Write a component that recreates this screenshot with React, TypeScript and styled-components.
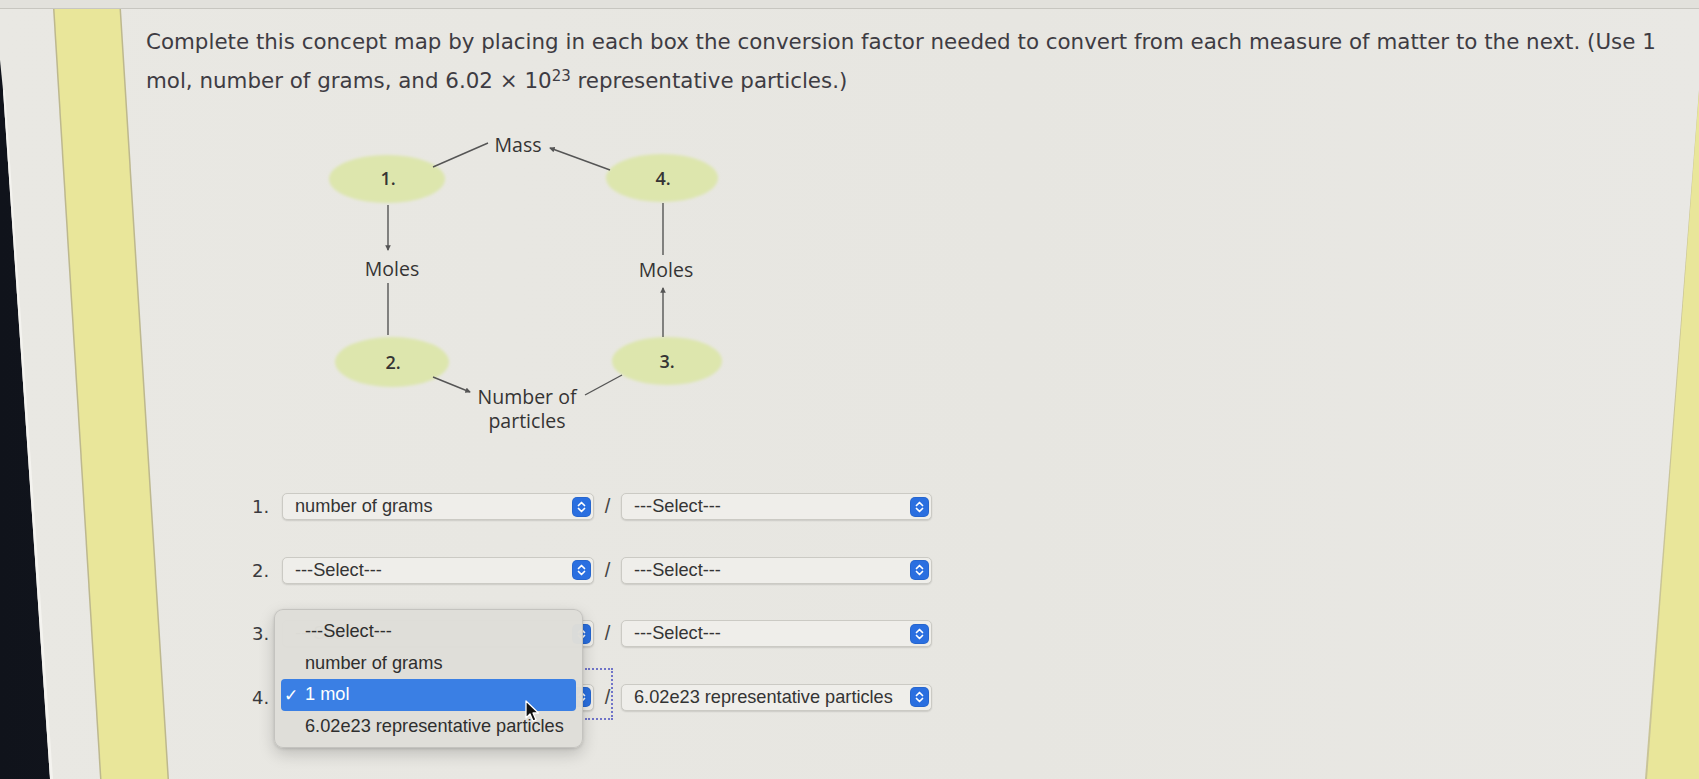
import React from "react";
import styled, { createGlobalStyle } from "styled-components";

const GlobalStyle = createGlobalStyle`
  html, body {
    margin: 0;
    padding: 0;
    overflow: hidden;
  }
  body {
    background: #e8e7e2;
  }
`;

const YELLOW = "#e9e69a";
const INK = "#3e3c43";

const Page = styled.div`
  display: grid;
  width: 100vw;
  height: 779px;
  overflow: hidden;
  background: linear-gradient(90deg, #e9e8e3 0%, #e7e6e1 60%, #e9e8e4 100%);

  > * {
    grid-area: 1 / 1;
  }
`;

const TopStrip = styled.div`
  align-self: start;
  height: 8px;
  background: #e2e1dc;
  border-bottom: 1px solid #c7c6c0;
`;

const DarkEdge = styled.div`
  background: linear-gradient(90deg, #10131b, #252a35);
  clip-path: polygon(0 60px, 3px 90px, 50px 100%, 0 100%);
`;

const EdgeHighlight = styled.div`
  background: #f4f3ef;
  clip-path: polygon(3px 90px, 5px 90px, 53px 100%, 50px 100%);
`;

const BandBorder = styled.div`
  background: #bdb88e;
  clip-path: polygon(53px 9px, 121px 9px, 169px 100%, 100px 100%);
`;

const Band = styled.div`
  background: ${YELLOW};
  clip-path: polygon(54.5px 9px, 119.5px 9px, 167.5px 100%, 101.5px 100%);
`;

const WedgeBorder = styled.div`
  background: #c9c497;
  clip-path: polygon(100% 90px, 100% 100%, calc(100% - 54px) 100%);
`;

const Wedge = styled.div`
  background: ${YELLOW};
  clip-path: polygon(100% 92px, 100% 100%, calc(100% - 52px) 100%);
`;

const Content = styled.main`
  display: flex;
  flex-direction: column;
  align-items: flex-start;
  padding: 22px 0 0 146px;
`;

const Question = styled.p`
  margin: 0;
  width: 1536px;
  font-family: "DejaVu Sans", Verdana, sans-serif;
  font-size: 21.4px;
  line-height: 39px;
  color: ${INK};

  sup {
    font-size: 0.7em;
    line-height: 0;
    vertical-align: 0.5em;
  }
`;

const MapFigure = styled.figure`
  margin: 25px 0 0 174px;
  width: 410px;
  height: 310px;

  svg {
    display: block;
  }

  text {
    font-family: "Open Sans", "Noto Sans", sans-serif;
    font-size: 19.5px;
    fill: #353434;
    text-anchor: middle;
  }

  text.num {
    font-weight: 600;
    font-size: 18px;
  }
`;

const Rows = styled.div`
  position: relative;
  margin: 58px 0 0 106px;
  display: grid;
  grid-template-columns: 30px 312px 27px 311px;
  grid-auto-rows: 27px;
  row-gap: 36.5px;
  align-items: center;
`;

const Num = styled.span`
  font-family: "DejaVu Sans", Verdana, sans-serif;
  font-size: 18px;
  color: #3a3a3e;
`;

const Slash = styled.span`
  justify-self: center;
  font-family: "Liberation Sans", Arial, sans-serif;
  font-size: 20px;
  color: #444;
`;

const SelectBox = styled.div`
  display: flex;
  align-items: center;
  justify-content: space-between;
  height: 27px;
  box-sizing: border-box;
  padding: 0 2px 0 12px;
  background: #efeeea;
  border: 1px solid #cbcac4;
  border-radius: 5px;
  box-shadow: 0 1px 1.5px rgba(0, 0, 0, 0.12);
  font-family: "Liberation Sans", Arial, sans-serif;
  font-size: 18.2px;
  color: #343434;
  white-space: nowrap;
`;

const Stepper = styled.span`
  display: inline-flex;
  align-items: center;
  justify-content: center;
  flex: none;
  width: 19px;
  height: 20px;
  border-radius: 5px;
  background: #2a6fe0;
  box-shadow: inset 0 0 0 1px rgba(0, 0, 0, 0.08);
`;

const Menu = styled.ul`
  position: absolute;
  left: 22px;
  top: 116px;
  width: 309px;
  height: 139px;
  box-sizing: border-box;
  margin: 0;
  padding: 6px 6px 7px;
  list-style: none;
  background: rgba(222, 221, 216, 0.98);
  border: 1px solid rgba(0, 0, 0, 0.12);
  border-radius: 9px;
  box-shadow: 0 6px 16px rgba(0, 0, 0, 0.18), 0 1px 3px rgba(0, 0, 0, 0.12);
  font-family: "Liberation Sans", Arial, sans-serif;
  font-size: 18.2px;
`;

const MenuItem = styled.li<{ $active?: boolean }>`
  display: grid;
  grid-template-columns: 21px 1fr;
  align-items: center;
  height: 31.5px;
  padding-left: 3px;
  border-radius: 4px;
  color: ${(p) => (p.$active ? "#ffffff" : "#2e2e2e")};
  background: ${(p) => (p.$active ? "#3a7fe4" : "transparent")};
  white-space: nowrap;
`;

const Check = styled.span`
  font-family: "DejaVu Sans", sans-serif;
  font-size: 17px;
  font-weight: bold;
`;

const FocusRing = styled.div`
  position: absolute;
  left: 333px;
  top: 175px;
  width: 26px;
  height: 48px;
  border: 2px dotted #7074c8;
  border-left: none;
  pointer-events: none;
`;

const Cursor = styled.svg`
  position: absolute;
  left: 273px;
  top: 207px;
`;

const StepperIcon = () => (
  <Stepper>
    <svg width="11" height="14" viewBox="0 0 11 14">
      <path d="M2.5 5.5 L5.5 2.5 L8.5 5.5 M2.5 8.5 L5.5 11.5 L8.5 8.5" fill="none" stroke="#fff" strokeWidth="1.7" strokeLinecap="round" strokeLinejoin="round" />
    </svg>
  </Stepper>
);

const Select = ({ value }: { value: string }) => (
  <SelectBox>
    <span>{value}</span>
    <StepperIcon />
  </SelectBox>
);

const ConceptMap = () => (
  <MapFigure>
    <svg width="410" height="310" viewBox="0 0 410 310">
      <defs>
        <filter id="soft" x="-20%" y="-30%" width="140%" height="160%">
          <feGaussianBlur stdDeviation="1.6" />
        </filter>
        <marker id="tip" viewBox="0 0 6 6" refX="5" refY="3" markerWidth="4" markerHeight="4" orient="auto">
          <path d="M0 0 L6 3 L0 6 z" fill="#555" />
        </marker>
      </defs>
      <g fill="#dde6ad" filter="url(#soft)">
        <ellipse cx="67" cy="54" rx="58" ry="24" />
        <ellipse cx="342" cy="53" rx="56" ry="24" />
        <ellipse cx="72" cy="237" rx="57" ry="25" />
        <ellipse cx="347" cy="236" rx="55" ry="24" />
      </g>
      <g stroke="#555" strokeWidth="1.4" fill="none">
        <line x1="113" y1="42" x2="168" y2="18" />
        <line x1="290" y1="45" x2="230" y2="23" markerEnd="url(#tip)" />
        <line x1="68" y1="80" x2="68" y2="125" markerEnd="url(#tip)" />
        <line x1="68" y1="158" x2="68" y2="210" />
        <line x1="343" y1="78" x2="343" y2="130" />
        <line x1="343" y1="212" x2="343" y2="163" markerEnd="url(#tip)" />
        <line x1="113" y1="252" x2="150" y2="267" markerEnd="url(#tip)" />
        <line x1="265" y1="270" x2="302" y2="250" />
      </g>
      <text x="198" y="27">Mass</text>
      <text className="num" x="68" y="60">1.</text>
      <text className="num" x="343" y="60">4.</text>
      <text className="num" x="73" y="244">2.</text>
      <text className="num" x="347" y="243">3.</text>
      <text x="72" y="151">Moles</text>
      <text x="346" y="152">Moles</text>
      <text x="207" y="279">Number of</text>
      <text x="207" y="303">particles</text>
    </svg>
  </MapFigure>
);

const rows: [string, string][] = [
  ["number of grams", "---Select---"],
  ["---Select---", "---Select---"],
  ["---Select---", "---Select---"],
  ["1 mol", "6.02e23 representative particles"],
];

const options = ["---Select---", "number of grams", "1 mol", "6.02e23 representative particles"];

export default function App() {
  return (
    <>
      <GlobalStyle />
      <Page>
        <DarkEdge />
        <EdgeHighlight />
        <BandBorder />
        <Band />
        <WedgeBorder />
        <Wedge />
        <TopStrip />
        <Content>
          <Question>
            Complete this concept map by placing in each box the conversion factor needed to convert from each
            measure of matter to the next. (Use 1 mol, number of grams, and 6.02 × 10<sup>23</sup> representative
            particles.)
          </Question>
          <ConceptMap />
          <Rows>
            {rows.map(([a, b], i) => (
              <React.Fragment key={i}>
                <Num>{i + 1}.</Num>
                <Select value={a} />
                <Slash>/</Slash>
                <Select value={b} />
              </React.Fragment>
            ))}
            <FocusRing />
            <Menu>
              {options.map((o) => (
                <MenuItem key={o} $active={o === "1 mol"}>
                  <Check>{o === "1 mol" ? "✓" : ""}</Check>
                  <span>{o}</span>
                </MenuItem>
              ))}
            </Menu>
            <Cursor width="16" height="24" viewBox="0 0 16 24">
              <path d="M1 1 L1 18 L5 14 L8 21 L11 19.8 L8 13 L13.5 13 Z" fill="#111" stroke="#fff" strokeWidth="1.3" strokeLinejoin="round" />
            </Cursor>
          </Rows>
        </Content>
      </Page>
    </>
  );
}
